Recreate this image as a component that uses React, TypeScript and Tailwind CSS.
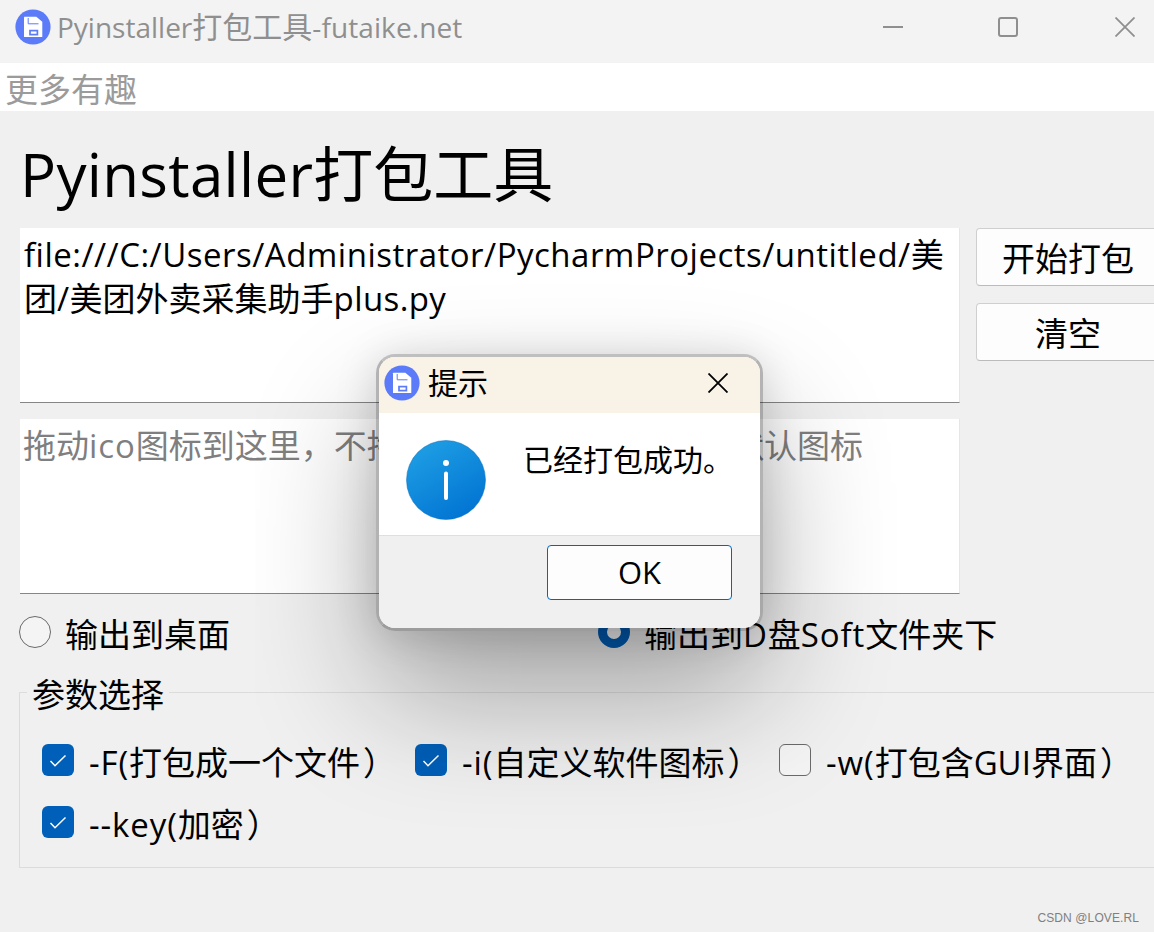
import React from 'react';

const options = [
  { flag: '-F(', label: '打包成一个文件', checked: true, width: 'w-[373px]' },
  { flag: '-i(', label: '自定义软件图标', checked: true, width: 'w-[364px]' },
  { flag: '-w(', label: '打包含GUI界面', checked: false, width: 'w-[360px]' },
  { flag: '--key(', label: '加密', checked: true, width: 'w-[373px]' },
];

function AppIcon() {
  return (
    <svg className="h-9 w-9 shrink-0" viewBox="0 0 36 36">
      <circle cx="18" cy="18" r="17.6" fill="#5b7bf8" />
      <path d="M9.5 7.7H21.3L27.3 12.7V27.5a.5.5 0 0 1-.5.5H9.5a.5.5 0 0 1-.5-.5V8.2a.5.5 0 0 1 .5-.5z" fill="#fff" />
      <path d="M13.2 9V14.8H23.5" fill="none" stroke="#5b7bf8" strokeWidth="1" />
      <rect x="15" y="21.6" width="7.4" height="4" fill="#fff" stroke="#5b7bf8" strokeWidth="1.7" />
    </svg>
  );
}

function CloseIcon() {
  return (
    <svg className="h-5 w-5" viewBox="0 0 20 20" fill="none" stroke="currentColor" strokeWidth="1.8">
      <path d="M0.5 0.5l19 19M19.5 0.5l-19 19" />
    </svg>
  );
}

type CheckboxProps = { flag: string; label: string; checked: boolean; width: string };

function Checkbox({ flag, label, checked, width }: CheckboxProps) {
  return (
    <label className={`flex h-[62px] items-center ${width}`}>
      {checked ? (
        <span className="flex h-8 w-8 shrink-0 items-center justify-center rounded-md bg-[#005fb8]">
          <svg className="h-8 w-8" viewBox="0 0 32 32" fill="none" stroke="#fff" strokeWidth="1.5">
            <path d="M8.5 17l4.5 4.7L23.5 11.5" />
          </svg>
        </span>
      ) : (
        <span className="h-8 w-8 shrink-0 rounded-md border-[1.5px] border-[#6a6a6a] bg-[#f4f4f4]" />
      )}
      <span className="ml-[15px] whitespace-nowrap pt-[5px]">
        <span className="tracking-[0.9px]">{flag}</span>
        {label}
        <span className="ml-[3px]">）</span>
      </span>
    </label>
  );
}

function MessageBox() {
  return (
    <div className="absolute left-[376px] top-[354px] w-[387px] rounded-[19px] border-[3px] border-black/30 border-b-black/35 border-t-black/25 bg-clip-padding shadow-[0_64px_128px_rgba(0,0,0,0.32),0_4px_42px_rgba(0,0,0,0.15)]">
      <div className="flex h-[271px] flex-col overflow-hidden rounded-[16px] bg-[#f0f0f0] text-[30px] leading-10">
        <div className="flex h-14 shrink-0 items-center bg-[#f9f2e6] pb-1 pl-[5px] pr-8">
          <AppIcon />
          <span className="ml-2 flex-1">提示</span>
          <CloseIcon />
        </div>
        <div className="flex h-[123px] shrink-0 border-b border-[#dfdfdf] bg-white pl-[27px] pt-[27px]">
          <svg className="h-20 w-20 shrink-0" viewBox="0 0 80 80">
            <defs>
              <linearGradient id="info" x1="0.2" y1="0" x2="0.8" y2="1">
                <stop offset="0" stopColor="#1f9fe4" />
                <stop offset="1" stopColor="#0072d2" />
              </linearGradient>
            </defs>
            <circle cx="40" cy="40" r="39.5" fill="url(#info)" stroke="#0a6fc0" strokeOpacity="0.5" />
            <circle cx="40" cy="23" r="3" fill="#fff" />
            <path d="M40 33.5v24.5" stroke="#fff" strokeWidth="4" strokeLinecap="round" />
          </svg>
          <span className="ml-[37px] whitespace-nowrap">已经打包成功。</span>
        </div>
        <div className="flex justify-end pr-7 pt-[9px]">
          <button className="h-[55px] w-[185px] rounded border border-[#0067c0] bg-[#fdfdfd] pb-px text-[31px]">OK</button>
        </div>
      </div>
    </div>
  );
}

export default function App() {
  return (
    <div className="relative h-[932px] w-[1154px] overflow-hidden bg-[#f0f0f0] font-['Open_Sans','Noto_Sans_CJK_SC',sans-serif] text-[33px] leading-[44px] text-black">
      <header className="flex h-[63px] items-start bg-[#f3f3f3] pl-[15px] text-[#8f8f8f]">
        <div className="mt-[9px] flex h-9 flex-1 items-center">
          <AppIcon />
          <h2 className="ml-[6px] whitespace-nowrap text-[30px]">
            <span className="text-[28px]">Pyinstaller</span>打包工具
            <span className="text-[28px] tracking-[0.1px]">-futaike.net</span>
          </h2>
        </div>
        <div className="mr-[19px] mt-[17px] flex items-center gap-[97px]">
          <span className="-mr-[2px] h-[2px] w-5 bg-current" />
          <span className="h-5 w-5 rounded-[3px] border-2 border-current" />
          <CloseIcon />
        </div>
      </header>

      <nav className="flex h-12 items-center bg-white pl-[5px] pt-[5px] text-[#9b9b9b]">更多有趣</nav>

      <main className="pl-5">
        <h1 className="h-[117px] whitespace-nowrap pt-[21px] text-[60px] leading-[84px]">
          <span className="tracking-[0.3px]">Pyinstaller</span>打包工具
        </h1>

        <div className="flex gap-4">
          <div className="flex w-[940px] shrink-0 flex-col gap-4">
            <div className="h-[175px] whitespace-nowrap border-b border-r border-b-[#868686] border-r-[#e6e6e6] bg-white pl-1 pt-[5px]">
              <p>
                <span className="tracking-[0.49px]">file:///C:/Users/Administrator/PycharmProjects/untitled/</span>美
              </p>
              <p>
                团<span className="tracking-[0.5px]">/</span>美团外卖采集助手<span className="tracking-[0.4px]">plus.py</span>
              </p>
            </div>
            <div className="flex h-[175px] justify-between whitespace-nowrap border-b border-r border-b-[#868686] border-r-[#e6e6e6] bg-white pl-[3px] pr-24 pt-[5px] text-[#7f7f7f]">
              <span>
                拖动<span className="tracking-[0.9px]">ico</span>图标到这里，不拖
              </span>
              <span>默认图标</span>
            </div>
          </div>
          <div className="flex w-[184px] shrink-0 flex-col gap-[17px]">
            <button className="h-[58px] rounded border border-[#cfcfcf] border-b-[#bbbbbb] bg-[#fdfdfd] pt-1">开始打包</button>
            <button className="h-[58px] rounded border border-[#cfcfcf] border-b-[#bbbbbb] bg-[#fdfdfd] pt-1">清空</button>
          </div>
        </div>

        <div className="-ml-px flex h-[76px] items-center">
          <label className="flex w-[579px] items-center">
            <span className="h-8 w-8 rounded-full border-[1.5px] border-[#6a6a6a] bg-[#f4f4f4]" />
            <span className="ml-[14px] pt-[5px]">输出到桌面</span>
          </label>
          <label className="flex items-center">
            <span className="h-8 w-8 rounded-full border-[9px] border-[#005fb8] bg-white" />
            <span className="ml-[14px] whitespace-nowrap pt-[5px]">
              输出到<span className="tracking-[0.9px]">D</span>盘<span className="tracking-[0.9px]">Soft</span>文件夹下
            </span>
          </label>
        </div>

        <fieldset className="-ml-px h-[198px] w-[1160px] border border-[#dcdcdc] pl-[22px]">
          <legend className="-ml-[15px] px-[5px]">
            <span className="relative top-[3px]">参数选择</span>
          </legend>
          <div className="flex flex-wrap pt-[15px]">
            {options.map((option) => (
              <Checkbox key={option.flag} {...option} />
            ))}
          </div>
        </fieldset>
      </main>

      <span className="absolute bottom-1 right-[15px] font-['Liberation_Sans',sans-serif] text-[12px] leading-5 tracking-[0.1px] text-[#7f7f7f]">
        CSDN @LOVE.RL
      </span>

      <MessageBox />
    </div>
  );
}
